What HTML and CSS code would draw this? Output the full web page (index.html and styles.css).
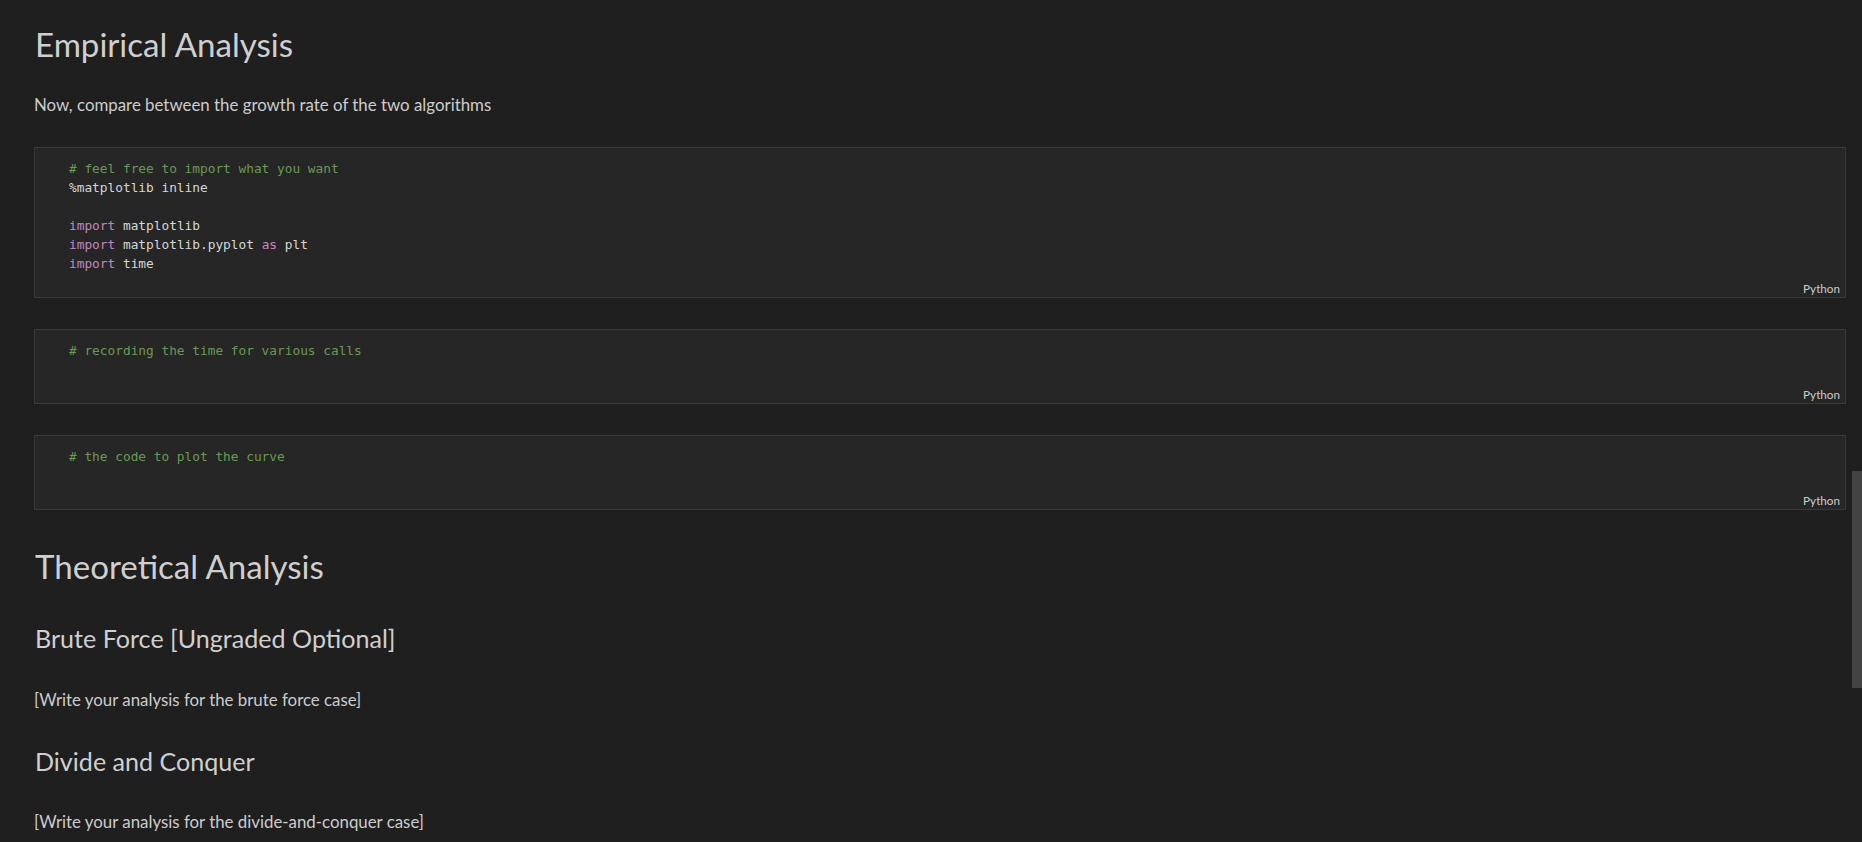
FILE: index.html
```html
<!DOCTYPE html>
<html lang="en">
<head>
<meta charset="utf-8">
<title>Notebook</title>
<link rel="stylesheet" href="styles.css">
</head>
<body>
<main class="nb">
  <section class="md">
    <h1 class="h1">Empirical Analysis</h1>
    <p class="p p-first">Now, compare between the growth rate of the two algorithms</p>
  </section>

  <div class="cell">
<pre class="code"><span class="c"># feel free to import what you want</span>
<span class="t">%matplotlib inline</span>

<span class="k">import</span> <span class="t">matplotlib</span>
<span class="k">import</span> <span class="t">matplotlib.pyplot</span> <span class="k">as</span> <span class="t">plt</span>
<span class="k">import</span> <span class="t">time</span></pre>
    <div class="status"><span class="lang">Python</span></div>
  </div>

  <div class="cell">
<pre class="code"><span class="c"># recording the time for various calls</span></pre>
    <div class="status"><span class="lang">Python</span></div>
  </div>

  <div class="cell">
<pre class="code"><span class="c"># the code to plot the curve</span></pre>
    <div class="status"><span class="lang">Python</span></div>
  </div>

  <section class="md">
    <h1 class="h1 h1-second">Theoretical Analysis</h1>
    <h2 class="h2 h2-first">Brute Force [Ungraded Optional]</h2>
    <p class="p p-second">[Write your analysis for the brute force case]</p>
    <h2 class="h2 h2-second">Divide and Conquer</h2>
    <p class="p p-third">[Write your analysis for the divide-and-conquer case]</p>
  </section>
</main>
<div class="scrollbar"></div>
</body>
</html>
```

FILE: styles.css
```css
html, body {
  margin: 0;
  padding: 0;
  background: #1f1f1f;
  height: 100%;
  overflow: hidden;
}

.nb {
  padding: 24px 16px 0 34px;
  font-family: Lato, "Open Sans", sans-serif;
  color: #cccccc;
}

.md {
  display: flex;
  flex-direction: column;
}

.h1 {
  margin: 0;
  font-size: 33.1px;
  line-height: 40px;
  font-weight: 400;
  padding-left: 1px;
  color: #cfcfcf;
}

.h1-second {
  margin-top: 36px;
}

.h2 {
  margin: 0;
  font-size: 25.1px;
  line-height: 30px;
  font-weight: 400;
  padding-left: 1px;
  color: #cfcfcf;
}

.h2-first {
  margin-top: 37px;
}

.h2-second {
  margin-top: 35px;
}

.p {
  margin: 0;
  font-size: 16.85px;
  line-height: 22px;
}

.p-first {
  margin-top: 30px;
}

.p-second {
  margin-top: 36px;
}

.p-third {
  margin-top: 35px;
}

.cell {
  margin-top: 31px;
  background: #262626;
  border: 1px solid #393939;
  display: flex;
  flex-direction: column;
}

.code {
  margin: 0;
  padding: 11px 0 0 34px;
  min-height: 38px;
  font-family: "DejaVu Sans Mono", "Liberation Mono", monospace;
  font-size: 12.8px;
  line-height: 19px;
  color: #d4d4d4;
}

.c { color: #6a9955; }
.k { color: #c586c0; }
.t { color: #d6d6d6; }

.status {
  height: 24px;
  display: flex;
  justify-content: flex-end;
  align-items: flex-end;
  padding: 0 5px 1px 0;
  box-sizing: border-box;
}

.lang {
  font-family: Lato, "Open Sans", sans-serif;
  font-size: 11.7px;
  line-height: 16px;
  color: #cccccc;
}

.scrollbar {
  position: absolute;
  right: 0;
  top: 471px;
  width: 10px;
  height: 217px;
  background: #434343;
}
```
